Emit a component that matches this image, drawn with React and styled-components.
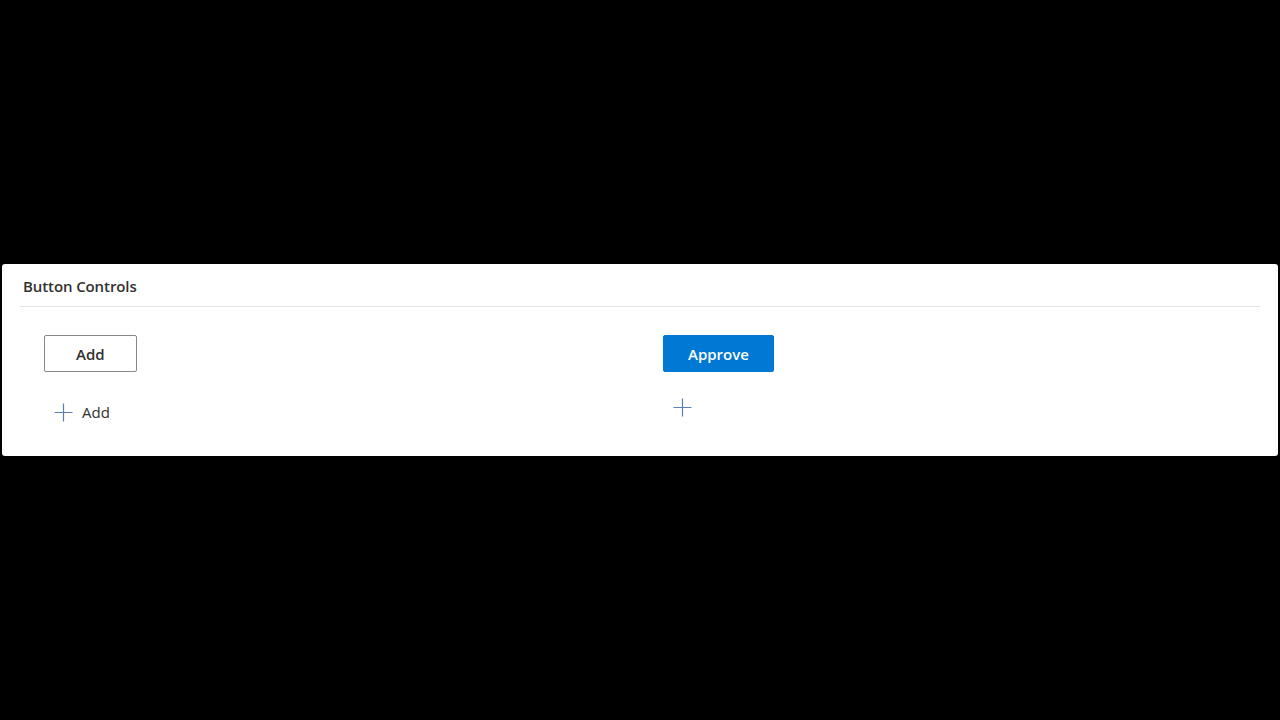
import React from 'react'
import styled, { createGlobalStyle } from 'styled-components'

const GlobalStyle = createGlobalStyle`
  html, body {
    margin: 0;
    padding: 0;
    background: #000;
  }
  body {
    font-family: "Open Sans", "Noto Sans", sans-serif;
    height: 720px;
    overflow: hidden;
  }
`

const Page = styled.div`
  padding-top: 264px;
  padding-left: 2px;
  padding-right: 2px;
`

const Card = styled.section`
  background: #fff;
  border-radius: 3px;
  height: 192px;
  box-sizing: border-box;
  box-shadow: 0 0 2px rgba(0, 0, 0, 0.12);
`

const Header = styled.div`
  margin: 0 18px;
  height: 43px;
  padding-left: 3px;
  padding-top: 2px;
  border-bottom: 1px solid #e6e4e2;
  display: flex;
  align-items: center;
  box-sizing: border-box;
`

const Title = styled.h2`
  margin: 0;
  font-size: 15px;
  font-weight: 600;
  color: #323130;
  letter-spacing: -0.1px;
`

const Body = styled.div`
  margin: 0 18px;
  display: grid;
  grid-template-columns: 1fr 1fr;
  padding-top: 28px;
`

const Column = styled.div`
  padding-left: ${p => p.$inset}px;
  display: flex;
  flex-direction: column;
  align-items: flex-start;
`

const Button = styled.button`
  height: 37px;
  padding: 0 ${p => p.$px}px;
  border-radius: 2px;
  font-family: "Open Sans", "Noto Sans", sans-serif;
  font-size: 15px;
  font-weight: 600;
  cursor: pointer;
  border: 1px solid ${p => (p.$primary ? '#0078d4' : '#8a8886')};
  background: ${p => (p.$primary ? '#0078d4' : '#fff')};
  color: ${p => (p.$primary ? '#fff' : '#323130')};
`

const IconButton = styled.button`
  margin-top: ${p => p.$mt}px;
  height: ${p => p.$h}px;
  padding: 0 10px;
  display: flex;
  align-items: center;
  gap: 9px;
  background: transparent;
  border: none;
  font-family: "Open Sans", "Noto Sans", sans-serif;
  font-size: 15px;
  color: #323130;
  cursor: pointer;
`

const PlusIcon = () => (
  <svg width="19" height="19" viewBox="0 0 19 19" fill="none">
    <path d="M9.5 0.5v18M0.5 9.5h18" stroke="#5a7fb3" strokeWidth="1.2" />
  </svg>
)

export default function App() {
  return (
    <>
      <GlobalStyle />
      <Page>
        <Card>
          <Header>
            <Title>Button Controls</Title>
          </Header>
          <Body>
            <Column $inset={24}>
              <Button $px={31}>Add</Button>
              <IconButton $mt={20} $h={40}>
                <PlusIcon />
                Add
              </IconButton>
            </Column>
            <Column $inset={23}>
              <Button $primary $px={24}>Approve</Button>
              <IconButton $mt={18} $h={35} aria-label="Add">
                <PlusIcon />
              </IconButton>
            </Column>
          </Body>
        </Card>
      </Page>
    </>
  )
}
